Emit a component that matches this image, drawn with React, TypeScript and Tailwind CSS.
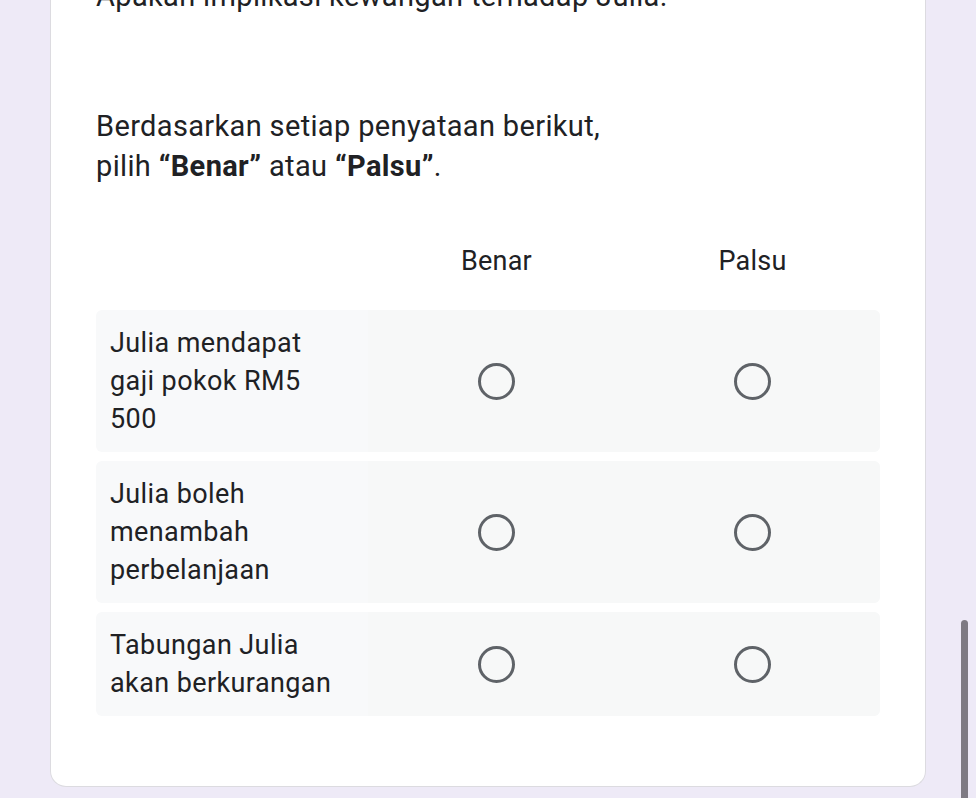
import React from "react";

const rows = [
  ["Julia mendapat", "gaji pokok RM5", "500"],
  ["Julia boleh", "menambah", "perbelanjaan"],
  ["Tabungan Julia", "akan berkurangan"],
];

function Radio() {
  return <div className="w-[37px] h-[37px] rounded-full border-[3px] border-[#5f6368]" />;
}

export default function App() {
  return (
    <div
      className="relative min-h-[798px] h-[798px] overflow-hidden bg-[#eeeaf7] text-[#202124]"
      style={{ fontFamily: "Roboto, 'Noto Sans', sans-serif" }}
    >
      <div className="mx-[50px] flex flex-col bg-white border border-t-0 border-[#dcdbe0] rounded-b-[16px] px-[45px] pb-[70px]">
        <p className="-mt-[24px] text-[29px] leading-[40px] tracking-[0.35px] whitespace-nowrap">Apakah implikasi kewangan terhadap Julia.</p>
        <p className="mt-[90px] text-[29px] leading-[40px] tracking-[0.35px]">
          Berdasarkan setiap penyataan berikut,
          <br />
          pilih <b className="font-bold">“Benar”</b> atau <b className="font-bold">“Palsu”</b>.
        </p>
        <div className="mt-[55px] grid grid-cols-[272px_257px_1fr] text-[27px] leading-[40px] tracking-[0.2px]">
          <div />
          <div className="text-center">Benar</div>
          <div className="text-center">Palsu</div>
        </div>
        <div className="mt-[29px] flex flex-col gap-[9px]">
          {rows.map((lines, i) => (
            <div key={i} className="grid grid-cols-[272px_257px_1fr] rounded-[6px] overflow-hidden bg-[#f8f9fa]">
              <div className="pl-[14px] py-[14px] text-[27px] leading-[38px] tracking-[0.4px]">
                {lines.map((l, j) => (
                  <div key={j} className="whitespace-nowrap">{l}</div>
                ))}
              </div>
              <div className="flex items-center justify-center bg-[#f7f8f8]">
                <Radio />
              </div>
              <div className="flex items-center justify-center bg-[#f7f8f8]">
                <Radio />
              </div>
            </div>
          ))}
        </div>
      </div>
      <div className="absolute left-[961px] top-[620px] w-[7px] h-[190px] rounded-t-full bg-[#7e7a83]" />
    </div>
  );
}
